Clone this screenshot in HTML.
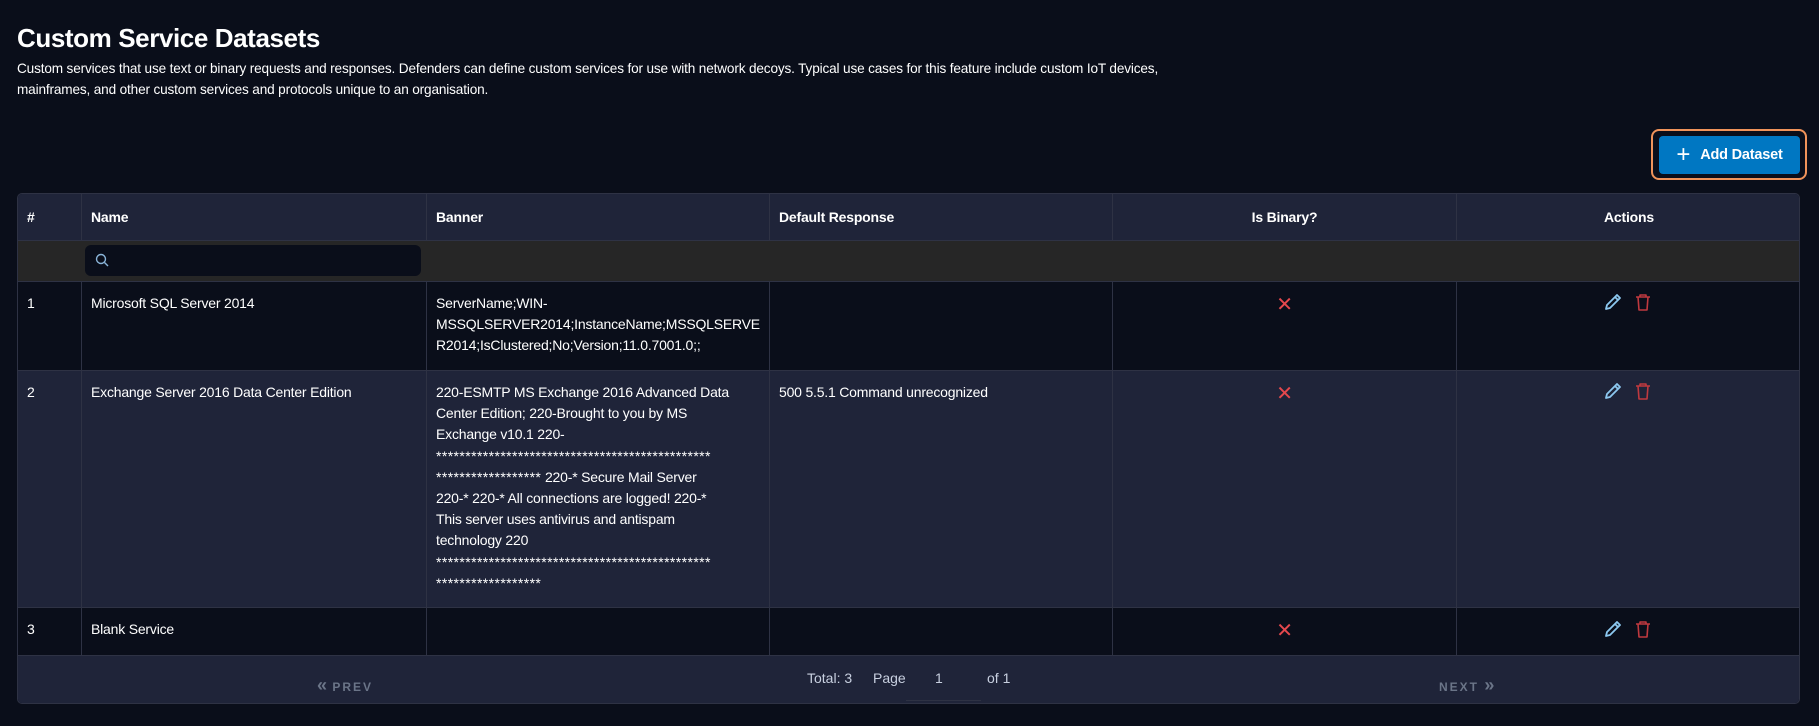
<!DOCTYPE html>
<html><head><meta charset="utf-8"><style>
*{box-sizing:border-box;margin:0;padding:0}
body{width:1819px;height:726px;background:#0a0e1a;color:#fff;font-family:"Liberation Sans",sans-serif;overflow:hidden;position:relative}
h1{position:absolute;left:17px;top:23px;font-size:26px;font-weight:600;letter-spacing:-0.4px}
.desc{position:absolute;left:17px;top:58px;font-size:13.6px;line-height:21px;width:1180px;letter-spacing:-0.15px}
.btnwrap{position:absolute;left:1651px;top:129px;width:156px;height:51px;border:2px solid #f0935a;border-radius:8px}
.btn{position:absolute;left:6px;top:5px;width:141px;height:38px;background:#0077c2;border-radius:4px;font-size:14.5px;font-weight:600;display:flex;align-items:center;justify-content:center;gap:10px;letter-spacing:-0.2px}
.tbl{position:absolute;left:17px;top:193px;width:1783px;height:511px;border:1px solid #2e3244;border-radius:5px;overflow:hidden}
.row{position:absolute;left:0;width:1783px;border-bottom:1px solid #2e3244}
.c{position:absolute;top:0;bottom:0;border-left:1px solid #2e3244;padding:11px 9px;font-size:14px;line-height:21.2px;letter-spacing:-0.2px;overflow-wrap:anywhere}
.c:first-child{border-left:none}
.hd .c{font-weight:600;font-size:14px;padding-top:13px}
.ctr{text-align:center}
.x{color:#e5484d;font-size:20px;line-height:18px;display:inline-block;margin-top:3px}
.foot{position:absolute;left:0;top:462px;width:1783px;height:49px;background:#1f2439}
.nav{position:absolute;top:19px;font-size:12px;font-weight:700;letter-spacing:2px;color:#6b7588}
.ast{letter-spacing:0.4px}
</style></head><body>
<h1>Custom Service Datasets</h1>
<div class="desc">Custom services that use text or binary requests and responses. Defenders can define custom services for use with network decoys. Typical use cases for this feature include custom IoT devices, mainframes, and other custom services and protocols unique to an organisation.</div>
<div class="btnwrap"><div class="btn"><span style="font-size:24px;font-weight:300;line-height:20px">+</span>Add Dataset</div></div>
<div class="tbl">
 <div class="row hd" style="top:0;height:47px;background:#1f2439">
  <div class="c" style="left:0;width:63px">#</div>
  <div class="c" style="left:63px;width:345px">Name</div>
  <div class="c" style="left:408px;width:343px">Banner</div>
  <div class="c" style="left:751px;width:343px">Default Response</div>
  <div class="c ctr" style="left:1094px;width:344px">Is Binary?</div>
  <div class="c ctr" style="left:1438px;width:345px">Actions</div>
 </div>
 <div class="row" style="top:47px;height:41px;background:#262626">
  <div style="position:absolute;left:67px;top:4px;width:336px;height:31px;background:#0a0e1a;border-radius:6px">
   <svg style="position:absolute;left:10px;top:8px" width="15" height="15" viewBox="0 0 15 15"><circle cx="6" cy="6" r="4.5" fill="none" stroke="#8ab4d8" stroke-width="1.4"/><path d="M9.5 9.5L13 13" stroke="#8ab4d8" stroke-width="1.4"/></svg>
  </div>
 </div>
 <div class="row" style="top:88px;height:89px;background:#0a0e1a">
  <div class="c" style="left:0;width:63px">1</div>
  <div class="c" style="left:63px;width:345px">Microsoft SQL Server 2014</div>
  <div class="c" style="left:408px;width:343px">ServerName;WIN-<br>MSSQLSERVER2014;InstanceName;MSSQLSERVE<br>R2014;IsClustered;No;Version;11.0.7001.0;;</div>
  <div class="c" style="left:751px;width:343px"></div>
  <div class="c ctr" style="left:1094px;width:344px"><span class="x">✕</span></div>
  <div class="c" style="left:1438px;width:345px"></div>
 </div>
 <div class="row" style="top:177px;height:237px;background:#1f2439">
  <div class="c" style="left:0;width:63px">2</div>
  <div class="c" style="left:63px;width:345px">Exchange Server 2016 Data Center Edition</div>
  <div class="c" style="left:408px;width:343px">220-ESMTP MS Exchange 2016 Advanced Data<br>Center Edition; 220-Brought to you by MS<br>Exchange v10.1 220-<br><span class="ast">***********************************************</span><br><span class="ast">******************</span> 220-* Secure Mail Server<br>220-* 220-* All connections are logged! 220-*<br>This server uses antivirus and antispam<br>technology 220<br><span class="ast">***********************************************</span><br><span class="ast">******************</span></div>
  <div class="c" style="left:751px;width:343px">500 5.5.1 Command unrecognized</div>
  <div class="c ctr" style="left:1094px;width:344px"><span class="x">✕</span></div>
  <div class="c" style="left:1438px;width:345px"></div>
 </div>
 <div class="row" style="top:414px;height:48px;background:#0a0e1a">
  <div class="c" style="left:0;width:63px">3</div>
  <div class="c" style="left:63px;width:345px">Blank Service</div>
  <div class="c" style="left:408px;width:343px"></div>
  <div class="c" style="left:751px;width:343px"></div>
  <div class="c ctr" style="left:1094px;width:344px"><span class="x">✕</span></div>
  <div class="c" style="left:1438px;width:345px"></div>
 </div>
 <div class="foot">
  <div class="nav" style="left:299px"><span style="font-size:18px;letter-spacing:0">«</span> PREV</div>
  <div style="position:absolute;left:789px;top:14px;font-size:14px;color:#c8d0e0">Total: 3</div>
  <div style="position:absolute;left:855px;top:14px;font-size:14px;color:#c8d0e0">Page</div>
  <div style="position:absolute;left:917px;top:14px;font-size:14px;color:#c8d0e0">1</div>
  <div style="position:absolute;left:888px;top:44px;width:75px;height:1px;background:#2e3244"></div>
  <div style="position:absolute;left:969px;top:14px;font-size:14px;color:#c8d0e0">of 1</div>
  <div class="nav" style="left:1421px">NEXT <span style="font-size:18px;letter-spacing:0">»</span></div>
 </div>
</div>
<svg style="position:absolute;left:1603px;top:293px" width="20" height="20" viewBox="0 0 20 20"><path d="M14 2l3 3L7 15l-4 1 1-4z M12 4l3 3" fill="none" stroke="#8cc8f0" stroke-width="1.8" stroke-linejoin="round"/></svg>
<svg style="position:absolute;left:1634px;top:293px" width="18" height="20" viewBox="0 0 18 20"><path d="M2 4h14M6 4V2h6v2M4 4l1 13h8l1-13" fill="none" stroke="#c0393f" stroke-width="1.6" stroke-linejoin="round"/></svg>
<svg style="position:absolute;left:1603px;top:382px" width="20" height="20" viewBox="0 0 20 20"><path d="M14 2l3 3L7 15l-4 1 1-4z M12 4l3 3" fill="none" stroke="#8cc8f0" stroke-width="1.8" stroke-linejoin="round"/></svg>
<svg style="position:absolute;left:1634px;top:382px" width="18" height="20" viewBox="0 0 18 20"><path d="M2 4h14M6 4V2h6v2M4 4l1 13h8l1-13" fill="none" stroke="#c0393f" stroke-width="1.6" stroke-linejoin="round"/></svg>
<svg style="position:absolute;left:1603px;top:620px" width="20" height="20" viewBox="0 0 20 20"><path d="M14 2l3 3L7 15l-4 1 1-4z M12 4l3 3" fill="none" stroke="#8cc8f0" stroke-width="1.8" stroke-linejoin="round"/></svg>
<svg style="position:absolute;left:1634px;top:620px" width="18" height="20" viewBox="0 0 18 20"><path d="M2 4h14M6 4V2h6v2M4 4l1 13h8l1-13" fill="none" stroke="#c0393f" stroke-width="1.6" stroke-linejoin="round"/></svg>
</body></html>
